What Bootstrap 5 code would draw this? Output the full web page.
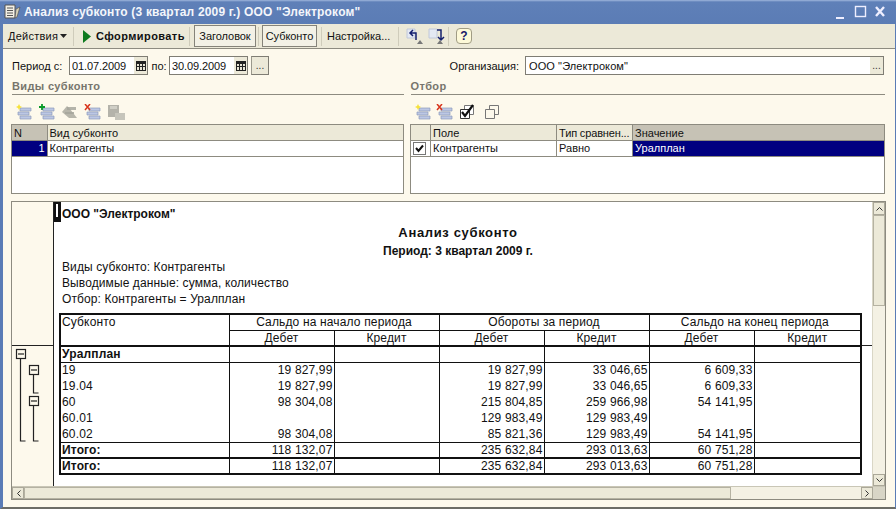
<!doctype html>
<html lang="ru"><head><meta charset="utf-8"><title>Анализ субконто</title>
<link href="https://cdn.jsdelivr.net/npm/bootstrap@5.3.0/dist/css/bootstrap.min.css" rel="stylesheet">
<style>
html,body{margin:0;background:#fdf9ec;overflow:hidden}
body{font:11px/14px "Liberation Sans",Arial,sans-serif;color:#111;width:896px;height:509px}
.win{width:896px;height:509px;border-left:3px solid #5a7cb6;border-right:1px solid #5a7cb6;border-bottom:2px solid #6d6d66;background:#fdf9ec}
.defs{position:absolute;width:0;height:0}
.ttl{height:24px;margin-left:-3px;margin-right:-1px;background:linear-gradient(#9fb6dc 0,#5f80b8 2px,#5b7cb5 100%);color:#f4f6fb;font-weight:700;font-size:12px;letter-spacing:.18px;padding:0 5px 0 3px}
.ttl-ic{margin-right:3px;flex:none}
.tbar{height:25px;background:#ece9d8;border-bottom:1px solid #8d8b80;padding-left:5px}
.tb-sep{width:1px;height:19px;background:#cfccbb;flex:none}
.tb-t{font-size:11px;letter-spacing:.1px;white-space:nowrap}
.act-t{width:50px;letter-spacing:.25px}
.caret-ic{margin-left:2px}.s1{margin:0 9px 0 6px}.play{margin-right:5px}
.form-t{width:88px;letter-spacing:.42px}.s2{margin:0 4px 0 5px}.s3{margin:0 3px 0 2px}.s4{margin:0 5px 0 2px}
.set-t{width:64px;letter-spacing:0}.s5{margin:0 6px 0 7px}.undo2{margin-left:5px}.s6{margin:0 7px 0 2px}
.tb-btn{height:22px;padding:0;border:1px solid #85837a;background:#f3f1e6;font:11px/20px "Liberation Sans",sans-serif;color:#111;letter-spacing:-.05px;border-radius:0}
.b-zag{width:62px}.b-sub{width:55px}
.help{width:16px;height:16px;border:1px solid #a09c84;border-radius:4px;background:#fdf9d8;font-weight:700;font-size:12px;line-height:14px;text-align:center;color:#1a1a6a}
.frm{height:19px;margin:7px 10px 0 9px}
.lb1{width:57px}.lb2{width:20px;text-align:center}.lb3{margin-right:6px;white-space:nowrap}
.ig1{width:80px}.ig3{width:360px}
.inp.form-control{height:19px;width:66px;border:1px solid #7f7d74;border-radius:0!important;padding:0 2px;font:11px/17px "Liberation Sans",sans-serif;color:#111;background:#fff;letter-spacing:-.1px;flex:none;box-shadow:none}
.inp.org.form-control{width:346px;padding-left:3px;letter-spacing:.1px}
.pick.btn{height:19px;border:1px solid #7f7d74;border-left:0;border-radius:0!important;padding:0;background:#ece9d8;width:14px;font:10px/14px "Liberation Sans",sans-serif;color:#333;display:flex;align-items:center;justify-content:center}
.dots.btn{width:18px;border-left:1px solid #9a988c;height:19px;margin-left:2px}
.sec{height:20px;margin:0 10px 0 9px;gap:7px}
.sec>div{border-bottom:1px solid #8d8b80;font-weight:700;color:#77756c;height:20px;line-height:23px;font-size:11px;letter-spacing:.35px}
.lft{width:392px}.rgt{width:475px}
.ics{height:29px;margin-left:9px;padding:9px 0 0 3px}
.ic-l{gap:5px;width:392px}
.ic-r{gap:5px;margin-left:7px}
.ic-2{margin-left:-1px}.ic-4{margin-left:-3px;transform:translateX(5px)}
.grids{margin:0 10px 0 8px;gap:6px}
.gridbox{height:70px;border:1px solid #8d8b80;background:#fff}
.gb1{width:393px}.gb2{width:476px}
table.sheet{table-layout:fixed;width:100%;margin:0}
table.sheet>:not(caption)>*>*{padding:0 2px;border:0;border-right:1px solid #8d8b80;height:16px;line-height:14px;font-size:11px;color:#111;background:#fff;box-shadow:none;white-space:nowrap;overflow:hidden}
table.sheet>thead>tr>th{font-weight:400;background:#ece9d8;height:15px;border-bottom:1px solid #8d8b80}
table.sheet>tbody>tr>td{border-bottom:1px solid #8d8b80;height:16px}
table.sheet>thead>tr>th.act{background:#c6c2b5}
table.sheet>tbody>tr>td.sel{background:#000080;color:#fff}
table.sheet>:not(caption)>*>*:last-child{border-right:0}
.w35{width:35px}.w20{width:20px}.w126{width:126px}.w76{width:76px}
.typ{letter-spacing:-.15px}
.chk{width:13px;height:13px;border:1px solid #777;background:#fff;display:block;margin:1px auto 0 2px}
.pan{height:299px;margin:7px 9px 0 8px;border:1px solid #8d8b80;background:#fff}
.main{height:284px}
.gut{width:42px;background:#fdf9ec;border-right:1px solid #222;flex:none}
.gut1{height:144px;border-bottom:1px solid #222}
.sheetwrap{width:819px;position:relative;font-size:12px}
.curs{position:absolute;left:0;top:0;width:7px;height:20px;background:#111}
.curs:after{content:"";position:absolute;left:2px;top:2px;width:2px;height:13px;background:#fff}
.hdr{height:111px;padding:4px 0 0 8px;letter-spacing:.1px}
.hdr div{height:16px;line-height:16px;white-space:nowrap}
.hdr .bold{letter-spacing:0}
.cen{text-align:center;width:808px;margin-left:-8px}
.hdr .bigt{font-size:13px;font-weight:700;height:20px;line-height:20px;letter-spacing:.65px;margin-top:1px}
.bold{font-weight:700}
.rt{width:801px;table-layout:fixed;border-collapse:collapse;border:2px solid #111;letter-spacing:.15px;margin-left:5px;flex:none}
.rt td{height:16px;padding:0 1px;border-right:1px solid #111;border-bottom:1px solid #111;line-height:14px;white-space:nowrap;overflow:hidden;vertical-align:middle}
.rt td.c{text-align:center}.rt td.r{text-align:right;padding-right:1px}
.rt tr.thk td,.rt td.thk{border-bottom:2px solid #111}
.rt tr.nl td{border-bottom:0}
.c1{width:169px}.c2{width:105px}.c3{width:107px}
.stub{height:33px;border-bottom:1px solid #222;flex:1}
.vsb{width:13px;background:#f4f1e4;border-left:1px solid #d9d6c6;flex:none}
.sbb{background:#ece9d8;border:1px solid #aba899;display:flex;align-items:center;justify-content:center;flex:none;padding:0;border-radius:0}
.h13{height:13px}.h12{height:12px}.w12{width:12px}
.thumb{background:#ece9d8;border:1px solid #b5b2a2;flex:none}
.tv{height:91px}.th{width:707px}
.hsb{height:13px;background:#f4f1e4;border-top:1px solid #c9c6b6}
.corner{width:12px;background:#d8d5c6}
</style></head><body>
<svg class="defs"><defs>
<symbol id="li" viewBox="0 0 16 15"><path d="M4 3h11v3H4zM2 7h11v3H2zM4 11h11v3H4z" fill="#bcc7e4" stroke="#8d9cbc" stroke-width=".7"/></symbol>
<symbol id="cal" viewBox="0 0 10 10"><path d="M0 0h10v10H0z" fill="#222"/><path d="M1 3h2v2H1zM4 3h2v2H4zM7 3h2v2H7zM1 6h2v3H1zM4 6h2v3H4zM7 6h2v3H7z" fill="#e9e6d6"/></symbol>
</defs></svg>
<div class="win d-flex flex-column">
 <div class="ttl d-flex align-items-center">
  <svg width="18" height="18" viewBox="0 0 18 18" class="ttl-ic"><path d="M2 2h10v13H2z" fill="#f2efe5" stroke="#555"/><path d="M4 5h6M4 7.500h6M4 10h6M4 12.500h6" stroke="#555"/><path d="M13 6l4-2-3 10-2 1z" fill="#d8d2b8" stroke="#555" stroke-width=".7"/></svg>
  <span class="flex-grow-1">Анализ субконто (3 квартал 2009 г.) ООО "Электроком"</span>
  <svg width="58" height="16" viewBox="0 0 58 16"><path d="M3 13h8v2H3z" fill="#eef"/><rect x="22.500" y="2.500" width="10" height="10" fill="none" stroke="#eef" stroke-width="1.400"/><path d="M43 3l8 9M51 3l-8 9" stroke="#eef" stroke-width="2.400"/></svg>
 </div>
 <div class="tbar d-flex align-items-center">
  <span class="tb-t act-t">Действия</span>
  <svg width="7" height="4" viewBox="0 0 7 4" class="caret-ic"><path d="M0 0h7L3.500 4z" fill="#222"/></svg>
  <span class="tb-sep s1"></span>
  <svg width="8" height="13" viewBox="0 0 8 13" class="play"><path d="M0 0l8 6.500L0 13z" fill="#0d7a1e"/></svg>
  <span class="tb-t fw-bold form-t">Сформировать</span>
  <span class="tb-sep s2"></span>
  <button class="btn tb-btn b-zag">Заголовок</button>
  <span class="tb-sep s3"></span>
  <button class="btn tb-btn b-sub">Субконто</button>
  <span class="tb-sep s4 ms-1"></span>
  <span class="tb-t set-t">Настройка...</span>
  <span class="tb-sep s5"></span>
  <svg width="18" height="18" viewBox="0 0 18 18"><path d="M2 2h8v9H2z" fill="#e4e9f3" stroke="#c0c8da"/><path d="M11 13V6H6M8 3L5 6l3 3" fill="none" stroke="#15206e" stroke-width="1.500"/><path d="M12 17l3-4 3 4z" fill="#777"/></svg>
  <svg width="18" height="18" viewBox="0 0 18 18" class="undo2"><path d="M1 2h8v9H1z" fill="#e4e9f3" stroke="#c0c8da"/><path d="M9 3h4v10M10 10l3 3 3-3" fill="none" stroke="#15206e" stroke-width="1.500"/><path d="M9 17l3-4 3 4z" fill="#777"/></svg>
  <span class="tb-sep s6"></span>
  <span class="help">?</span>
 </div>
 <div class="frm d-flex align-items-center">
  <span class="lb1">Период с:</span>
  <div class="input-group flex-nowrap ig1"><input class="form-control inp" value="01.07.2009" readonly><button class="btn pick"><svg width="10" height="10"><use href="#cal"/></svg></button></div>
  <span class="lb2">по:</span>
  <div class="input-group flex-nowrap ig1"><input class="form-control inp" value="30.09.2009" readonly><button class="btn pick"><svg width="10" height="10"><use href="#cal"/></svg></button></div>
  <button class="btn pick dots">...</button>
  <span class="ms-auto lb3">Организация:</span>
  <div class="input-group flex-nowrap ig3"><input class="form-control inp org" value='ООО "Электроком"' readonly><button class="btn pick">...</button></div>
 </div>
 <div class="sec d-flex"><div class="lft">Виды субконто</div><div class="rgt">Отбор</div></div>
 <div class="ics d-flex">
  <div class="d-flex ic-l">
   <svg width="18" height="16" viewBox="0 0 18 16"><use href="#li" x="1" y="1" width="16" height="15"/><path d="M4 0l1 2 2 1-2 1-1 2-1-2-2-1 2-1z" fill="#f6e23a"/></svg>
   <svg width="18" height="16" viewBox="0 0 18 16"><use href="#li" x="1" y="1" width="16" height="15"/><path d="M4 0v6M1 3h6" stroke="#0a9a2a" stroke-width="1.800"/></svg>
   <svg width="18" height="16" viewBox="0 0 18 16"><path d="M6 3h9v3H6zM4 8h9v2H4z" fill="#b4b4aa"/><path d="M1 8l5-6 3 3 7 9H8z" fill="#a5a59b" opacity=".8"/></svg>
   <svg width="18" height="16" viewBox="0 0 18 16"><use href="#li" x="1" y="1" width="16" height="15"/><path d="M1 0l5 6M6 0L1 6" stroke="#d8341c" stroke-width="1.500"/></svg>
   <svg width="18" height="16" viewBox="0 0 18 16"><path d="M1 1h11v12H1z" fill="#b4b3aa"/><path d="M3 2h7v3H3z" fill="#d0cfc6"/><path d="M8 9h10v7H8z" fill="#c6c5bb"/></svg>
  </div>
  <div class="d-flex ic-r">
   <svg width="18" height="16" viewBox="0 0 18 16"><use href="#li" x="1" y="1" width="16" height="15"/><path d="M4 0l1 2 2 1-2 1-1 2-1-2-2-1 2-1z" fill="#f6e23a"/></svg>
   <svg width="18" height="16" viewBox="0 0 18 16" class="ic-2"><use href="#li" x="1" y="1" width="16" height="15"/><path d="M1 0l5 6M6 0L1 6" stroke="#d8341c" stroke-width="1.500"/></svg>
   <svg width="16" height="16" viewBox="0 0 16 16"><path d="M5.500 1.500h9v9h-9z" fill="#fff" stroke="#777"/><path d="M1.500 5.500h9v9h-9z" fill="#fff" stroke="#333"/><path d="M3 8l3 4 8-11" fill="none" stroke="#111" stroke-width="2.200"/></svg>
   <svg width="16" height="16" viewBox="0 0 16 16" class="ms-1"><path d="M5.500 1.500h9v9h-9z" fill="#fdf9ec" stroke="#777"/><path d="M1.500 5.500h9v9h-9z" fill="#fdf9ec" stroke="#777"/></svg>
  </div>
 </div>
 <div class="grids d-flex">
  <div class="gridbox gb1"><table class="table sheet"><colgroup><col class="w35"><col></colgroup>
   <thead><tr><th class="act">N</th><th>Вид субконто</th></tr></thead>
   <tbody><tr><td class="sel text-end">1</td><td>Контрагенты</td></tr></tbody></table></div>
  <div class="gridbox gb2"><table class="table sheet"><colgroup><col class="w20"><col class="w126"><col class="w76"><col></colgroup>
   <thead><tr><th></th><th>Поле</th><th class="typ">Тип сравнен...</th><th class="act">Значение</th></tr></thead>
   <tbody><tr><td class="p-0"><span class="chk"><svg width="11" height="11" viewBox="0 0 11 11" class="d-block"><path d="M2 5l2.500 3L9 2.500" fill="none" stroke="#111" stroke-width="2"/></svg></span></td><td>Контрагенты</td><td>Равно</td><td class="sel">Уралплан</td></tr></tbody></table></div>
 </div>
 <div class="pan d-flex flex-column">
  <div class="main d-flex">
   <div class="gut">
    <div class="gut1"></div>
    <svg width="41" height="100" viewBox="0 0 41 100" class="d-block"><g fill="none" stroke="#222" stroke-width="1.200"><path d="M8.500 13v82h5M21.500 29v18h5M21.500 60v35h5"/><rect x="4.500" y="3.500" width="9" height="9" fill="#fdf9ec"/><path d="M6 8h6"/><rect x="17.500" y="19.500" width="9" height="9" fill="#fdf9ec"/><path d="M19 24h6"/><rect x="17.500" y="50.500" width="9" height="9" fill="#fdf9ec"/><path d="M19 55h6"/></g></svg>
   </div>
   <div class="sheetwrap">
    <span class="curs"></span>
    <div class="hdr">
     <div class="bold">ООО "Электроком"</div>
     <div class="bigt cen">Анализ субконто</div>
     <div class="bold cen">Период: 3 квартал 2009 г.</div>
     <div>Виды субконто: Контрагенты</div>
     <div>Выводимые данные: сумма, количество</div>
     <div>Отбор: Контрагенты = Уралплан</div>
    </div>
    <div class="d-flex">
    <table class="rt"><colgroup><col class="c1"><col class="c2"><col class="c2"><col class="c2"><col class="c2"><col class="c2"><col class="c3"></colgroup>
     <tr><td rowspan="2" class="align-top thk">Субконто</td><td colspan="2" class="c">Сальдо на начало периода</td><td colspan="2" class="c">Обороты за период</td><td colspan="2" class="c">Сальдо на конец периода</td></tr>
     <tr class="thk"><td class="c">Дебет</td><td class="c">Кредит</td><td class="c">Дебет</td><td class="c">Кредит</td><td class="c">Дебет</td><td class="c">Кредит</td></tr>
     <tr><td class="bold">Уралплан</td><td></td><td></td><td></td><td></td><td></td><td></td></tr>
     <tr class="nl"><td>19</td><td class="r">19 827,99</td><td></td><td class="r">19 827,99</td><td class="r">33 046,65</td><td class="r">6 609,33</td><td></td></tr>
     <tr class="nl"><td>19.04</td><td class="r">19 827,99</td><td></td><td class="r">19 827,99</td><td class="r">33 046,65</td><td class="r">6 609,33</td><td></td></tr>
     <tr class="nl"><td>60</td><td class="r">98 304,08</td><td></td><td class="r">215 804,85</td><td class="r">259 966,98</td><td class="r">54 141,95</td><td></td></tr>
     <tr class="nl"><td>60.01</td><td></td><td></td><td class="r">129 983,49</td><td class="r">129 983,49</td><td></td><td></td></tr>
     <tr><td>60.02</td><td class="r">98 304,08</td><td></td><td class="r">85 821,36</td><td class="r">129 983,49</td><td class="r">54 141,95</td><td></td></tr>
     <tr class="thk"><td class="bold">Итого:</td><td class="r">118 132,07</td><td></td><td class="r">235 632,84</td><td class="r">293 013,63</td><td class="r">60 751,28</td><td></td></tr>
     <tr><td class="bold">Итого:</td><td class="r">118 132,07</td><td></td><td class="r">235 632,84</td><td class="r">293 013,63</td><td class="r">60 751,28</td><td></td></tr>
    </table>
    <div class="stub"></div>
    </div>
   </div>
   <div class="vsb d-flex flex-column">
    <button class="btn sbb h13"><svg width="7" height="5" viewBox="0 0 7 5"><path d="M.5 4.500l3-3 3 3" fill="none" stroke="#333"/></svg></button>
    <div class="thumb tv"></div>
    <div class="flex-grow-1"></div>
    <button class="btn sbb h12"><svg width="7" height="5" viewBox="0 0 7 5"><path d="M.5.500l3 3 3-3" fill="none" stroke="#333"/></svg></button>
   </div>
  </div>
  <div class="hsb d-flex">
   <button class="btn sbb w12"><svg width="5" height="7" viewBox="0 0 5 7"><path d="M4.500.500l-3 3 3 3" fill="none" stroke="#333"/></svg></button>
   <div class="thumb th"></div>
   <div class="flex-grow-1"></div>
   <button class="btn sbb w12"><svg width="5" height="7" viewBox="0 0 5 7"><path d="M.5.500l3 3-3 3" fill="none" stroke="#333"/></svg></button>
   <div class="corner"></div>
  </div>
 </div>
</div>
</body></html>
